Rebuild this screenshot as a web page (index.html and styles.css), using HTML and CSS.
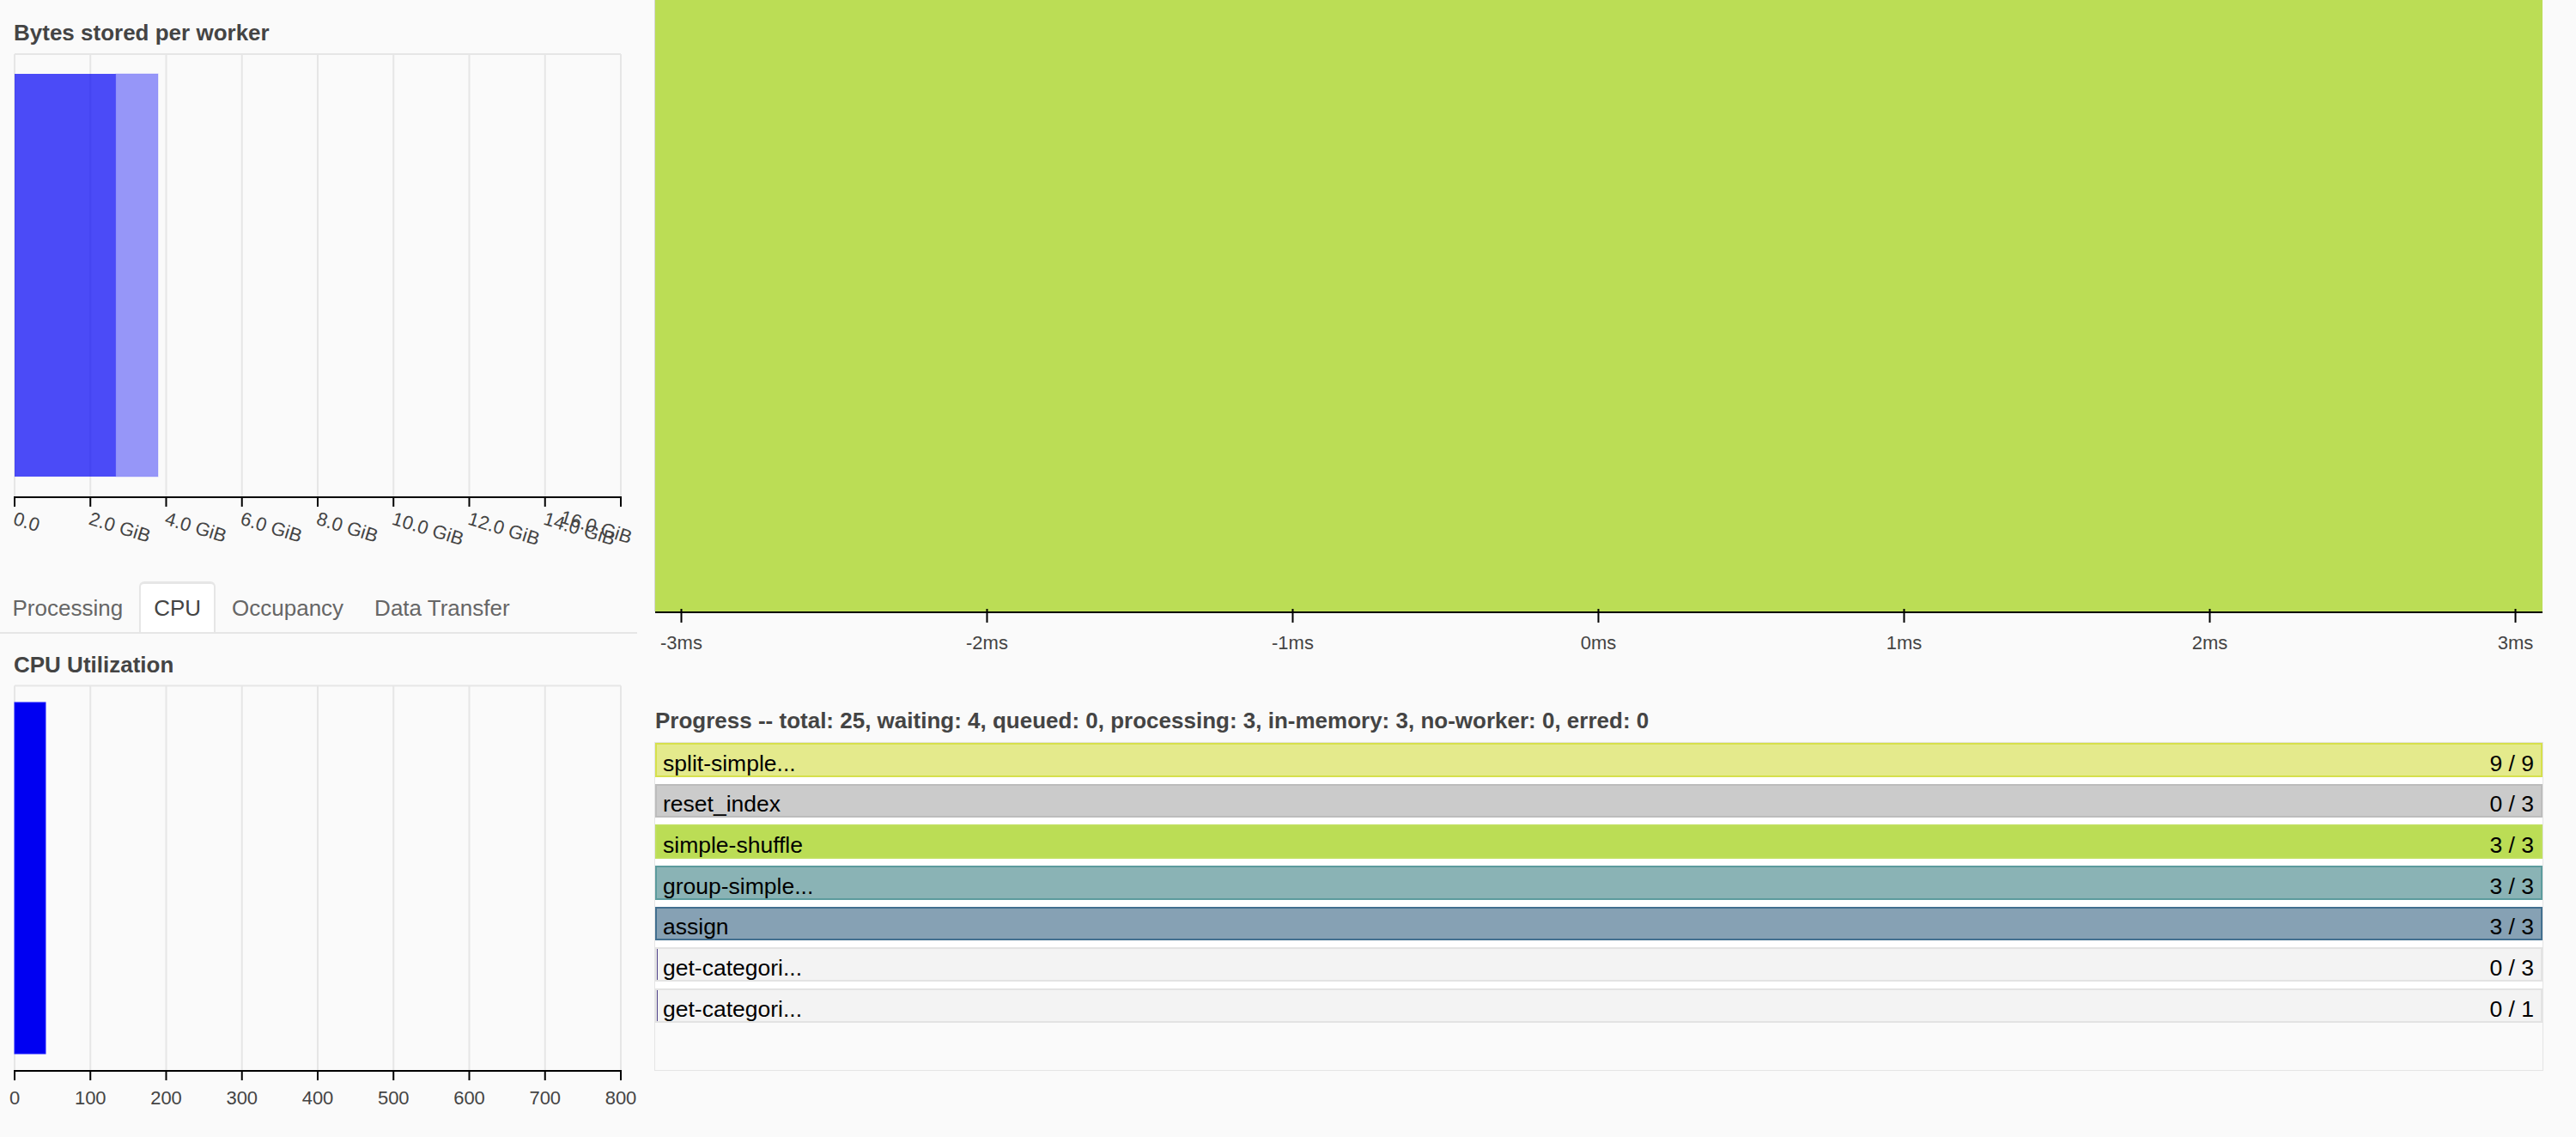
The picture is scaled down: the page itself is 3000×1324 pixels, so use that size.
FILE: index.html
```html
<!DOCTYPE html>
<html lang="en">
<head>
<meta charset="utf-8">
<title>Dask Dashboard</title>
<link rel="stylesheet" href="styles.css">
</head>
<body>
<div class="layout">
  <div class="left-col">
    <h2 class="plot-title first">Bytes stored per worker</h2>
    <svg class="chart chart-bytes" width="742" height="626" viewBox="0 0 742 626">
      <g class="grid">
        <line x1="17" y1="12" x2="723" y2="12"/>
        <line x1="17" y1="12" x2="17" y2="527"/>
        <line x1="105.25" y1="12" x2="105.25" y2="527"/>
        <line x1="193.5" y1="12" x2="193.5" y2="527"/>
        <line x1="281.75" y1="12" x2="281.75" y2="527"/>
        <line x1="370" y1="12" x2="370" y2="527"/>
        <line x1="458.25" y1="12" x2="458.25" y2="527"/>
        <line x1="546.5" y1="12" x2="546.5" y2="527"/>
        <line x1="634.75" y1="12" x2="634.75" y2="527"/>
        <line x1="723" y1="12" x2="723" y2="527"/>
      </g>
      <rect class="bar-managed" x="17" y="35" width="118" height="469"/>
      <rect class="bar-unmanaged" x="135" y="35" width="49" height="469"/>
      <g class="axis">
        <line x1="16" y1="528" x2="724" y2="528"/>
        <line x1="17" y1="527" x2="17" y2="539"/>
        <line x1="105.25" y1="527" x2="105.25" y2="539"/>
        <line x1="193.5" y1="527" x2="193.5" y2="539"/>
        <line x1="281.75" y1="527" x2="281.75" y2="539"/>
        <line x1="370" y1="527" x2="370" y2="539"/>
        <line x1="458.25" y1="527" x2="458.25" y2="539"/>
        <line x1="546.5" y1="527" x2="546.5" y2="539"/>
        <line x1="634.75" y1="527" x2="634.75" y2="539"/>
        <line x1="723" y1="527" x2="723" y2="539"/>
      </g>
      <g class="tick-label">
        <text transform="translate(19 544) rotate(17)" y="16">0.0</text>
        <text transform="translate(107 544) rotate(17)" y="16">2.0 GiB</text>
        <text transform="translate(195.5 544) rotate(17)" y="16">4.0 GiB</text>
        <text transform="translate(283.5 544) rotate(17)" y="16">6.0 GiB</text>
        <text transform="translate(372 544) rotate(17)" y="16">8.0 GiB</text>
        <text transform="translate(460 544) rotate(17)" y="16">10.0 GiB</text>
        <text transform="translate(548.5 544) rotate(17)" y="16">12.0 GiB</text>
        <text transform="translate(636.5 544) rotate(17)" y="16">14.0 GiB</text>
        <text transform="translate(656 542) rotate(17)" y="16">16.0 GiB</text>
      </g>
    </svg>
    <div class="tabs">
      <div class="tab">Processing</div>
      <div class="tab active">CPU</div>
      <div class="tab">Occupancy</div>
      <div class="tab">Data Transfer</div>
    </div>
    <h2 class="plot-title second">CPU Utilization</h2>
    <svg class="chart chart-cpu" width="742" height="537" viewBox="0 0 742 537">
      <g class="grid">
        <line x1="17" y1="11.5" x2="723" y2="11.5"/>
        <line x1="17" y1="11.5" x2="17" y2="459"/>
        <line x1="105.25" y1="11.5" x2="105.25" y2="459"/>
        <line x1="193.5" y1="11.5" x2="193.5" y2="459"/>
        <line x1="281.75" y1="11.5" x2="281.75" y2="459"/>
        <line x1="370" y1="11.5" x2="370" y2="459"/>
        <line x1="458.25" y1="11.5" x2="458.25" y2="459"/>
        <line x1="546.5" y1="11.5" x2="546.5" y2="459"/>
        <line x1="634.75" y1="11.5" x2="634.75" y2="459"/>
        <line x1="723" y1="11.5" x2="723" y2="459"/>
      </g>
      <rect class="bar-cpu" x="17" y="31" width="36" height="409"/>
      <g class="axis">
        <line x1="16" y1="460" x2="724" y2="460"/>
        <line x1="17" y1="459" x2="17" y2="471"/>
        <line x1="105.25" y1="459" x2="105.25" y2="471"/>
        <line x1="193.5" y1="459" x2="193.5" y2="471"/>
        <line x1="281.75" y1="459" x2="281.75" y2="471"/>
        <line x1="370" y1="459" x2="370" y2="471"/>
        <line x1="458.25" y1="459" x2="458.25" y2="471"/>
        <line x1="546.5" y1="459" x2="546.5" y2="471"/>
        <line x1="634.75" y1="459" x2="634.75" y2="471"/>
        <line x1="723" y1="459" x2="723" y2="471"/>
      </g>
      <g class="tick-label centered">
        <text x="17" y="499">0</text>
        <text x="105.25" y="499">100</text>
        <text x="193.5" y="499">200</text>
        <text x="281.75" y="499">300</text>
        <text x="370" y="499">400</text>
        <text x="458.25" y="499">500</text>
        <text x="546.5" y="499">600</text>
        <text x="634.75" y="499">700</text>
        <text x="723" y="499">800</text>
      </g>
    </svg>
  </div>

  <div class="right-col">
    <svg class="chart chart-stream" width="2200" height="770" viewBox="0 0 2200 770">
      <rect class="stream-fill" x="1" y="0" width="2198" height="712"/>
      <line class="frame-edge" x1="0.5" y1="0" x2="0.5" y2="712"/>
      <g class="axis">
        <line x1="1" y1="713" x2="2199" y2="713"/>
        <line x1="31.5" y1="709" x2="31.5" y2="725"/>
        <line x1="387.5" y1="709" x2="387.5" y2="725"/>
        <line x1="743.5" y1="709" x2="743.5" y2="725"/>
        <line x1="1099.5" y1="709" x2="1099.5" y2="725"/>
        <line x1="1455.5" y1="709" x2="1455.5" y2="725"/>
        <line x1="1811.5" y1="709" x2="1811.5" y2="725"/>
        <line x1="2167.5" y1="709" x2="2167.5" y2="725"/>
      </g>
      <g class="tick-label centered">
        <text x="31.5" y="756">-3ms</text>
        <text x="387.5" y="756">-2ms</text>
        <text x="743.5" y="756">-1ms</text>
        <text x="1099.5" y="756">0ms</text>
        <text x="1455.5" y="756">1ms</text>
        <text x="1811.5" y="756">2ms</text>
        <text x="2167.5" y="756">3ms</text>
      </g>
    </svg>
    <h2 class="progress-title">Progress -- total: 25, waiting: 4, queued: 0, processing: 3, in-memory: 3, no-worker: 0, erred: 0</h2>
    <div class="progress-box">
      <div class="progress-list">
        <div class="prow c-split"><span class="pname">split-simple...</span><span class="pcount">9 / 9</span></div>
        <div class="prow c-reset"><span class="pname">reset_index</span><span class="pcount">0 / 3</span></div>
        <div class="prow c-shuffle"><span class="pname">simple-shuffle</span><span class="pcount">3 / 3</span></div>
        <div class="prow c-group"><span class="pname">group-simple...</span><span class="pcount">3 / 3</span></div>
        <div class="prow c-assign"><span class="pname">assign</span><span class="pcount">3 / 3</span></div>
        <div class="prow c-empty"><span class="pname">get-categori...</span><span class="pcount">0 / 3</span></div>
        <div class="prow c-empty"><span class="pname">get-categori...</span><span class="pcount">0 / 1</span></div>
      </div>
    </div>
  </div>
</div>
</body>
</html>
```

FILE: styles.css
```css
html, body {
  margin: 0;
  padding: 0;
}

body {
  width: 3000px;
  height: 1324px;
  overflow: hidden;
  background: #fafafa;
  font-family: "Liberation Sans", Arial, Helvetica, sans-serif;
  color: #444;
}

.layout {
  display: flex;
  gap: 20px;
  align-items: flex-start;
}

.left-col {
  width: 742px;
  flex: none;
  display: flex;
  flex-direction: column;
}

.right-col {
  width: 2200px;
  flex: none;
  display: flex;
  flex-direction: column;
}

.chart {
  display: block;
  flex: none;
}

.plot-title {
  margin: 0;
  font-size: 26px;
  line-height: 26px;
  height: 26px;
  font-weight: bold;
  color: #444;
  padding-left: 16px;
  white-space: nowrap;
}

.plot-title.first {
  margin-top: 25px;
}

.plot-title.second {
  margin-top: 23px;
}

.grid line {
  stroke: #e6e6e6;
  stroke-width: 2;
}

.axis line {
  stroke: #000;
  stroke-width: 2;
}

.bar-managed {
  fill: rgba(0, 0, 245, 0.7);
}

.bar-unmanaged {
  fill: rgba(0, 0, 245, 0.4);
  stroke: rgba(120, 120, 250, 0.35);
  stroke-width: 1;
}

.bar-cpu {
  fill: #0000f2;
  stroke: #1a1aff;
  stroke-width: 1;
}

.tick-label text {
  font-family: "Liberation Sans", Arial, Helvetica, sans-serif;
  font-size: 22px;
  fill: #444;
}

.tick-label.centered text {
  text-anchor: middle;
}

/* Tabs */
.tabs {
  display: flex;
  height: 59px;
  border-bottom: 2px solid #e6e6e6;
}

.tab {
  margin-right: 2px;
  padding: 0 15px;
  border: 2px solid transparent;
  border-top-width: 3px;
  border-bottom: none;
  line-height: 56px;
  font-size: 26px;
  color: #666;
  white-space: nowrap;
}

.tab:first-child {
  margin-left: -2.5px;
}

.tab.active {
  background: #fff;
  border-color: #e6e6e6;
  border-radius: 6px 6px 0 0;
  color: #444;
}

/* Task stream */
.stream-fill {
  fill: #bbdd55;
}

.frame-edge {
  stroke: #d6d6d6;
  stroke-width: 1;
}

/* Progress */
.progress-title {
  margin: 56px 0 0 1px;
  font-size: 26px;
  line-height: 26px;
  height: 26px;
  font-weight: bold;
  color: #444;
  white-space: nowrap;
}

.progress-box {
  margin-top: 12px;
  height: 383px;
  box-sizing: border-box;
  border: 1px solid #e5e5e5;
  background: #fafafa;
}

.progress-list {
  display: flex;
  flex-direction: column;
  gap: 8px;
  background: #fff;
}

.prow {
  box-sizing: border-box;
  height: 39.7px;
  border: 2px solid transparent;
  padding: 0 8px 1px 7px;
  display: flex;
  justify-content: space-between;
  align-items: flex-end;
  font-size: 26.5px;
  line-height: 26px;
  color: #000;
  white-space: nowrap;
}

.c-split {
  background: #e4ea8c;
  border-color: #d6e04c;
}

.c-reset {
  background: #cbcbcb;
  border-color: #bcbcbc;
}

.c-shuffle {
  background: #bbdd55;
  border-color: #bfdf5c;
}

.c-group {
  background: #8ab3b5;
  border-color: #5c9b9d;
}

.c-assign {
  background: #86a1b4;
  border-color: #426f8f;
}

.c-empty {
  background: #f3f3f3;
  border-color: #e3e3e3;
  box-shadow: inset 1px 0 0 #54478f;
}
```
